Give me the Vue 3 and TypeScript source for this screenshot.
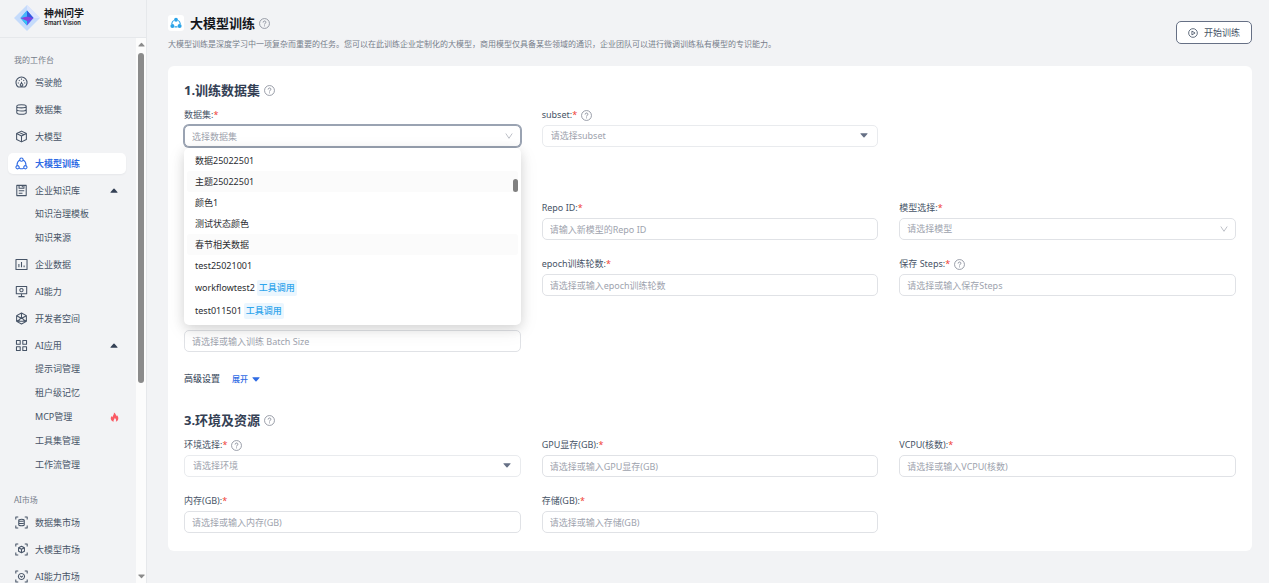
<script setup lang="ts">
import { ref } from 'vue'

interface SubItem { label: string; hot?: boolean }
interface NavItem { label: string; icon: string; active?: boolean; children?: SubItem[] }
interface Field {
  id: string
  label?: string
  placeholder: string
  kind: 'input' | 'select' | 'picker'
  col: number
  help?: boolean
}

const icons: Record<string, string> = {
  gauge: 'M4 13.6a6.8 6.8 0 1 1 8 0zM8 7.2v2M8 9.2a1.6 1.6 0 1 0 .1 0M8 3.2v1.4M3.4 8.6h1.4M11.2 8.6h1.4M4.8 5.2l.9.9M11.2 5.2l-.9.9',
  db: 'M2.2 4C2.200 1.400 13.800 1.400 13.800 4v8c0 2.600-11.600 2.600-11.600 0zM2.200 4.200c0 2.400 11.600 2.400 11.600 0M2.200 8.100c0 2.400 11.600 2.400 11.600 0',
  cube: 'M8 1.4l6 3v7.2l-6 3-6-3V4.400zM2 4.400l6 3 6-3M8 7.400v7.200M5 2.900l6 3',
  nodes: 'M8 1.200a2 2 0 1 1-.1 0M3.200 10.600a2 2 0 1 1-.1 0M12.800 10.600a2 2 0 1 1-.1 0M6 3.800C3.800 4.900 2.500 7 2.500 10.300M10 3.800c2.200 1.100 3.500 3.200 3.500 6.500M5.400 13.800c1.600.9 3.600.9 5.200 0',
  book: 'M2.200 1.700h11.600v12.600H2.200zM5 1.700v3.600h6V1.700M9 1.700v2.200M4.600 8.300h6.800M4.600 11.300h4.600',
  chart: 'M1.200 1.900h13.600v12.200H1.200zM4.800 7.500v4M8 5v6.500M11.200 9.200v2.300',
  monitor: 'M1.600 1.800h12.800v9H1.600zM8 4.300a2 2 0 1 1-.1 0M8 10.800v3M4.200 14.300h7.600',
  dev: 'M8 1.200l6 3.300v7L8 14.800l-6-3.300v-7zM8 1.200v5M2.200 11.300l4.300-2.500M13.800 11.300L9.500 8.800M8 6.200L4 11.500h8zM2.200 4.600L8 8l5.800-3.400',
  grid: 'M1.800 1.800h4.600v4.600H1.800zM9.600 1.800h4.600v4.600H9.600zM1.800 9.600h4.600v4.600H1.800zM9.600 9.600h4.600v4.600H9.600z',
  marketDb: 'M1 4.200V1.200h3M12 1.200h3v3M15 11.800v3h-3M4 14.800H1v-3M4.600 5.300c0-1.600 6.800-1.600 6.800 0v5.400c0 1.600-6.800 1.600-6.800 0zM4.600 5.500c0 1.400 6.800 1.400 6.800 0M4.600 8.200c0 1.400 6.800 1.400 6.800 0',
  marketCube: 'M1 4.200V1.200h3M12 1.200h3v3M15 11.800v3h-3M4 14.800H1v-3M8 4l3.600 1.900v4.200L8 12l-3.600-1.900V5.900zM4.400 5.900L8 7.800l3.600-1.900M8 7.800V12',
  marketAi: 'M1 4.200V1.200h3M12 1.200h3v3M15 11.800v3h-3M4 14.800H1v-3M8 4.200a3.800 3.800 0 1 1-.1 0M6.300 7.200L8 8.800l1.700-1.600',
}

const workspace: NavItem[] = [
  { label: '驾驶舱', icon: 'gauge' },
  { label: '数据集', icon: 'db' },
  { label: '大模型', icon: 'cube' },
  { label: '大模型训练', icon: 'nodes', active: true },
  { label: '企业知识库', icon: 'book', children: [{ label: '知识治理模板' }, { label: '知识来源' }] },
  { label: '企业数据', icon: 'chart' },
  { label: 'AI能力', icon: 'monitor' },
  { label: '开发者空间', icon: 'dev' },
  {
    label: 'AI应用',
    icon: 'grid',
    children: [
      { label: '提示词管理' },
      { label: '租户级记忆' },
      { label: 'MCP管理', hot: true },
      { label: '工具集管理' },
      { label: '工作流管理' },
    ],
  },
]
const market: NavItem[] = [
  { label: '数据集市场', icon: 'marketDb' },
  { label: '大模型市场', icon: 'marketCube' },
  { label: 'AI能力市场', icon: 'marketAi' },
]
const navGroups = [
  { title: '我的工作台', items: workspace },
  { title: 'AI市场', items: market },
]

const modelFields: Field[] = [
  { id: 'repo', label: 'Repo ID', placeholder: '请输入新模型的Repo ID', kind: 'input', col: 2 },
  { id: 'model', label: '模型选择', placeholder: '请选择模型', kind: 'picker', col: 3 },
  { id: 'epoch', label: 'epoch训练轮数', placeholder: '请选择或输入epoch训练轮数', kind: 'input', col: 2 },
  { id: 'steps', label: '保存 Steps', placeholder: '请选择或输入保存Steps', kind: 'input', col: 3, help: true },
  { id: 'batch', placeholder: '请选择或输入训练 Batch Size', kind: 'input', col: 1 },
]
const envFields: Field[] = [
  { id: 'env', label: '环境选择', placeholder: '请选择环境', kind: 'select', col: 1, help: true },
  { id: 'gpu', label: 'GPU显存(GB)', placeholder: '请选择或输入GPU显存(GB)', kind: 'input', col: 2 },
  { id: 'vcpu', label: 'VCPU(核数)', placeholder: '请选择或输入VCPU(核数)', kind: 'input', col: 3 },
  { id: 'memory', label: '内存(GB)', placeholder: '请选择或输入内存(GB)', kind: 'input', col: 1 },
  { id: 'storage', label: '存储(GB)', placeholder: '请选择或输入存储(GB)', kind: 'input', col: 2 },
]
const fieldSets = [modelFields, envFields]

const datasets = [
  { name: '数据25022501' },
  { name: '主题25022501', shade: true },
  { name: '颜色1' },
  { name: '测试状态颜色' },
  { name: '春节相关数据', shade: true },
  { name: 'test25021001' },
  { name: 'workflowtest2', tag: '工具调用' },
  { name: 'test011501', tag: '工具调用' },
]
const dataset = ref('')
const open = ref(true)
function choose(name: string) {
  dataset.value = name
  open.value = false
}
</script>

<template>
  <div class="layout">
    <svg class="defs" aria-hidden="true">
      <symbol id="help" viewBox="0 0 12 12">
        <circle cx="6" cy="6" r="5.400" fill="none" stroke="currentColor" stroke-width=".9" />
        <path d="M4.500 4.900C4.500 2.700 7.600 2.800 7.500 4.700 7.500 5.700 6 5.800 6 7.100M6 8.100v1" fill="none" stroke="currentColor" />
      </symbol>
      <symbol id="down" viewBox="0 0 8 5"><path d="M.8.300h6.400q.7.200.2.800L4.500 4.300q-.5.400-1 0L.6 1.100Q.100.500.8.300z" fill="currentColor" /></symbol>
      <symbol id="chevron" viewBox="0 0 8 8"><path d="M.8 1.500L4 6.300l3.200-4.800" fill="none" stroke="currentColor" stroke-width=".9" /></symbol>
    </svg>

    <aside class="sidebar">
      <header class="brand">
        <svg class="logo" viewBox="0 0 26 26" aria-hidden="true">
          <defs>
            <linearGradient id="gem" x1="0" y1="0" x2="1" y2="1">
              <stop offset="0" stop-color="#35d5f5" /><stop offset=".5" stop-color="#3f6bf0" /><stop offset="1" stop-color="#8a3ff0" />
            </linearGradient>
          </defs>
          <path d="M13 0l13 13-13 13L0 13z" fill="#c5dbfb" />
          <path d="M13 0l13 13H13z" fill="#dbe5fd" />
          <path d="M13 5.500L19.500 13 13 20.500 6.500 13z" fill="url(#gem)" />
          <path d="M6.500 13l6.500 7.500V15z" fill="#35c4f5" />
          <path d="M6.500 13l6.500-1.500 6.500 1.500-6.500 3z" fill="#8a3fdc" />
          <path d="M13 5.500v6L6.500 13z" fill="#45b6fa" />
          <path d="M13 5.500l6.500 7.500-6.500-1.500z" fill="#315be0" />
        </svg>
        <span class="brand-text"><strong>神州问学</strong><em>Smart Vision</em></span>
      </header>
      <div class="side-body">
        <nav class="nav">
          <section v-for="g in navGroups" :key="g.title" class="nav-section">
            <h2 class="nav-title">{{ g.title }}</h2>
            <div v-for="item in g.items" :key="item.label" class="nav-group">
              <a href="#" class="nav-item" :class="{ active: item.active }">
                <svg class="nav-icon" viewBox="0 0 16 16"><path :d="icons[item.icon]" /></svg>
                <span>{{ item.label }}</span>
                <svg v-if="item.children" class="caret up"><use href="#down" /></svg>
              </a>
              <div v-if="item.children" class="nav-children">
                <a v-for="sub in item.children" :key="sub.label" href="#" class="nav-sub">
                  <span>{{ sub.label }}</span>
                  <svg v-if="sub.hot" class="flame" viewBox="0 0 10 12">
                    <path d="M4.300.5C6.200 1.700 7 3.300 6.900 5c.5-.3.8-.8.900-1.500C9.200 5 9.900 6.600 9.500 8.300 9.200 9.900 8.100 11 6.600 11.600c.8-1.700.4-3-1.400-4.600.1 1.100-.3 1.700-.9 2.300-.6.7-.7 1.500-.3 2.300C1.900 11 .5 9.700.5 7.800.5 6.400 1.100 5.600 1.900 4.900c.1.700.3 1.100.7 1.400C2.700 4.200 4.800 3.100 4.300.500z" fill="#fa5a64" />
                  </svg>
                </a>
              </div>
            </div>
          </section>
        </nav>
        <div class="scrollbar" aria-hidden="true">
          <svg class="arrow up"><use href="#down" /></svg>
          <div class="track"><div class="thumb"></div></div>
          <svg class="arrow"><use href="#down" /></svg>
        </div>
      </div>
    </aside>

    <main class="main">
      <header class="page-head">
        <div>
          <h1 class="page-title">
            <span class="title-icon">
              <svg viewBox="0 0 16 16">
                <path d="M5 4.500Q2.500 6 2.300 9.500M11 4.500q2.500 1.500 2.700 5M6 13.200h4" fill="none" stroke="#2aa3e8" stroke-width="1.500" />
                <circle cx="8" cy="3.600" r="2.600" fill="#2aa3e8" /><circle cx="3.200" cy="12" r="2.700" fill="#2aa3e8" /><circle cx="12.800" cy="12" r="2.700" fill="#2aa3e8" />
              </svg>
            </span>
            <span>大模型训练</span>
            <svg class="help"><use href="#help" /></svg>
          </h1>
          <p class="desc">大模型训练是深度学习中一项复杂而重要的任务。您可以在此训练企业定制化的大模型，商用模型仅具备某些领域的通识，企业团队可以进行微调训练私有模型的专识能力。</p>
        </div>
        <button type="button" class="start">
          <svg viewBox="0 0 12 12"><circle cx="6" cy="6" r="5.200" /><path d="M4.700 3.700L8.500 6 4.700 8.300z" /></svg>
          开始训练
        </button>
      </header>

      <form class="card" @submit.prevent>
        <h2 class="section-title">1.训练数据集<svg class="help"><use href="#help" /></svg></h2>
        <div class="fields">
          <div class="field">
            <label for="dataset">数据集:<i>*</i></label>
            <div class="control">
              <input id="dataset" v-model="dataset" class="focused" role="combobox" aria-controls="dataset-list" :aria-expanded="open" placeholder="选择数据集" @click="open = !open" />
              <svg class="chevron"><use href="#chevron" /></svg>
              <div v-if="open" class="dropdown">
                <ul id="dataset-list" role="listbox">
                  <li v-for="d in datasets" :key="d.name" role="option" :class="{ shade: d.shade, tagged: d.tag }" @click="choose(d.name)">
                    <span>{{ d.name }}</span><span v-if="d.tag" class="tag">{{ d.tag }}</span>
                  </li>
                </ul>
                <div class="list-thumb"></div>
              </div>
            </div>
          </div>
          <div class="field">
            <label for="subset">subset:<i>*</i><svg class="help"><use href="#help" /></svg></label>
            <div class="control">
              <select id="subset"><option>请选择subset</option></select>
              <svg class="caret"><use href="#down" /></svg>
            </div>
          </div>
        </div>

        <template v-for="(set, s) in fieldSets" :key="s">
          <template v-if="s === 1">
            <div class="advanced">
              <span>高级设置</span>
              <button type="button">展开<svg class="caret"><use href="#down" /></svg></button>
            </div>
            <h2 class="section-title">3.环境及资源<svg class="help"><use href="#help" /></svg></h2>
          </template>
          <div class="fields" :class="{ model: s === 0 }">
            <div v-for="f in set" :key="f.id" class="field" :class="'col-' + f.col">
              <label :for="f.id"><template v-if="f.label">{{ f.label }}:<i>*</i></template><svg v-if="f.help" class="help"><use href="#help" /></svg></label>
              <div class="control">
                <input v-if="f.kind === 'input'" :id="f.id" :placeholder="f.placeholder" />
                <select v-else :id="f.id" :class="f.kind"><option>{{ f.placeholder }}</option></select>
                <svg v-if="f.kind === 'select'" class="caret"><use href="#down" /></svg>
                <svg v-if="f.kind === 'picker'" class="chevron"><use href="#chevron" /></svg>
              </div>
            </div>
          </div>
        </template>
      </form>
    </main>
  </div>
</template>

<style>
body { margin: 0; background: #f2f3f5; }
</style>

<style scoped>
.layout {
  display: flex;
  height: 100vh;
  overflow: hidden;
  background: #f2f3f5;
  color: #475467;
  font: 9px/16px "Noto Sans", "Noto Sans CJK SC", sans-serif;
}
.layout * { box-sizing: border-box; }
svg { display: block; flex: none; }
.defs { position: absolute; width: 0; height: 0; }
h1, h2, p, ul { margin: 0; padding: 0; }
a { color: inherit; text-decoration: none; }
input, select, button { font: inherit; margin: 0; }

.sidebar { width: 147px; flex: none; display: flex; flex-direction: column; border-right: 1px solid #e6e8eb; }
.brand { height: 38px; flex: none; display: flex; align-items: center; gap: 4px; padding: 0 14px 2px; border-bottom: 1px solid #e6e8eb; }
.logo { width: 26px; height: 26px; }
.brand-text { display: flex; flex-direction: column; color: #15171c; }
.brand-text strong { font-size: 10px; line-height: 11px; font-weight: 700; }
.brand-text em { font: 600 6px/8px Inter, sans-serif; }
.side-body { flex: 1; min-height: 0; display: flex; }
.nav { flex: 1; min-width: 0; overflow: hidden; padding: 14px 10px 0 8px; }
.nav-section + .nav-section { margin-top: 15px; }
.nav-title { padding-left: 6px; margin-bottom: 4px; font-size: 8px; line-height: 16px; font-weight: 400; color: #777e8b; }
.nav-group { margin-bottom: 6px; }
.nav-group:has(.nav-children) { margin-bottom: 4px; }
.nav-children { padding-top: 1px; }
.nav-item { height: 21px; display: flex; align-items: center; gap: 7px; padding: 0 8px 0 7px; border-radius: 5px; }
.nav-item.active { background: #fff; color: #2f6be4; font-weight: 700; box-shadow: 0 1px 2px #1018280d; }
.nav-icon { width: 13px; height: 13px; fill: none; stroke: currentColor; stroke-width: 1.300; stroke-linejoin: round; }
.caret { width: 8px; height: 5px; }
.up { transform: rotate(180deg); }
.nav-item .caret { margin-left: auto; color: #344054; }
.nav-sub { height: 24px; display: flex; align-items: center; justify-content: space-between; padding: 0 7px 0 27px; }
.flame { width: 9px; height: 10px; }
.scrollbar { width: 10px; display: flex; flex-direction: column; align-items: center; padding: 4px 0; background: #fcfcfc; color: #8b8b8b; }
.arrow { width: 7px; height: 5px; }
.track { flex: 1; padding: 6px 0; width: 6px; }
.thumb { height: 64%; border-radius: 3px; background: #8b8b8b; }

.main { flex: 1; min-width: 0; padding: 14px 17px 0 21px; }
.page-head { display: flex; justify-content: space-between; align-items: flex-start; height: 52px; }
.page-title { display: flex; align-items: center; font-size: 13px; line-height: 18px; font-weight: 700; color: #15171c; }
.title-icon { width: 16px; height: 16px; margin-right: 6px; padding: 2px; border-radius: 3px; background: #fff; }
.title-icon svg { width: 12px; height: 12px; }
.help { width: 11px; height: 11px; margin-left: 4px; color: #858b98; }
.desc { margin-top: 4px; font-size: 8px; line-height: 16px; color: #777e8b; }
.start { margin-top: 7px; height: 23px; padding: 0 11px; display: flex; align-items: center; gap: 6px; border: 1px solid #667085; border-radius: 5px; background: #fff; color: #475467; white-space: nowrap; }
.start svg { width: 10px; height: 10px; fill: none; stroke: currentColor; }

.card { padding: 14px 16px 18px; border-radius: 6px; background: #fff; }
.section-title { display: flex; align-items: center; margin-bottom: 7px; font-size: 13px; line-height: 20px; font-weight: 700; color: #344054; }
.fields { display: grid; grid-template-columns: repeat(3, minmax(0, 1fr)); gap: 16px 21px; }
.fields.model { margin-top: 53px; }
.col-1 { grid-column: 1; }
.col-2 { grid-column: 2; }
.col-3 { grid-column: 3; }
label { display: flex; align-items: center; height: 16px; margin-bottom: 2px; }
label i { color: #f04438; font-style: normal; }
.control { position: relative; }
input, select { display: block; width: 100%; height: 22px; padding: 0 7px; border: 1px solid #e0e2e6; border-radius: 5px; background: #fff; color: #9ea3ae; outline: 0; appearance: none; }
select { padding: 0 8px; border-color: #e9ebee; }
select.picker { padding: 0 7px; border-color: #e0e2e6; }
input::placeholder { color: #9ea3ae; opacity: 1; }
input.focused { border-color: #9aa3b2; box-shadow: 0 0 0 1px #9aa3b2; }
.control > .caret { position: absolute; right: 10px; top: 8px; color: #667085; }
.chevron { position: absolute; right: 8px; top: 7px; width: 8px; height: 8px; color: #b5b9c1; }
.dropdown { position: absolute; z-index: 2; top: 23px; left: 0; right: 0; padding: 2px 3px 3px; border-radius: 5px; background: #fff; box-shadow: 0 3px 12px #0000001f, 0 5px 20px #00000014; color: #2b2d31; }
.dropdown ul { list-style: none; }
.dropdown li { height: 21px; display: flex; align-items: center; gap: 2px; padding: 0 8px; border-radius: 3px; }
.dropdown li.tagged { height: 23px; }
.dropdown li.shade { background: #fbfbfb; }
.tag { padding: 0 2px; border-radius: 2px; background: #ebf6fe; color: #2fa5ec; font-weight: 500; }
.list-thumb { position: absolute; right: 3px; top: 31px; width: 5px; height: 13px; border-radius: 3px; background: #808080; }
.advanced { display: flex; align-items: center; gap: 12px; margin: 19px 0 23px; font-weight: 500; }
.advanced button { display: flex; align-items: center; gap: 4px; padding: 0; border: 0; background: none; color: #2f6be4; font-size: 8px; line-height: 16px; }
</style>
